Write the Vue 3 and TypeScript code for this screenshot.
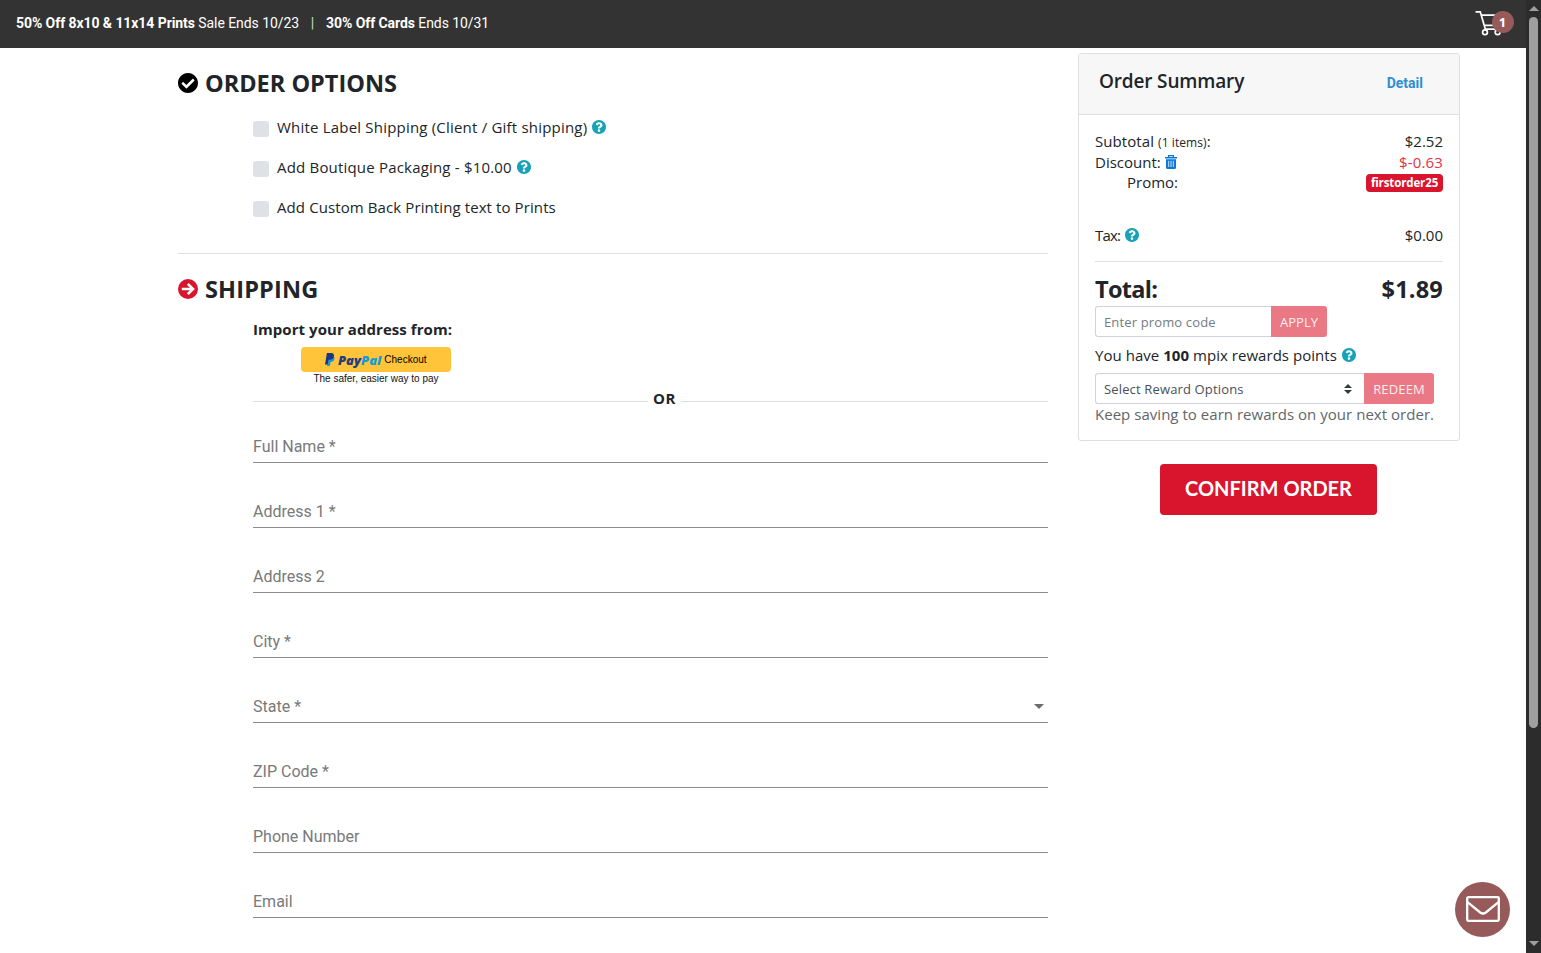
<script setup lang="ts">
import { ref } from 'vue'

interface ShippingField {
  label: string
  dropdown?: boolean
}

interface OrderOption {
  label: string
  help: boolean
  cls: string
}

const options: OrderOption[] = [
  { label: 'White Label Shipping (Client / Gift shipping)', help: true, cls: 'opt-a' },
  { label: 'Add Boutique Packaging - $10.00', help: true, cls: 'opt-b' },
  { label: 'Add Custom Back Printing text to Prints', help: false, cls: 'opt-c' },
]

const fields: ShippingField[] = [
  { label: 'Full Name *' },
  { label: 'Address 1 *' },
  { label: 'Address 2' },
  { label: 'City *' },
  { label: 'State *', dropdown: true },
  { label: 'ZIP Code *' },
  { label: 'Phone Number' },
  { label: 'Email' },
]

const promo = ref('')

const helpPath =
  'M504 256c0 136.997-111.043 248-248 248S8 392.997 8 256C8 119.083 119.043 8 256 8s248 111.083 248 248zM262.655 90c-54.497 0-89.255 22.957-116.549 63.758-3.536 5.286-2.353 12.415 2.715 16.258l34.699 26.31c5.205 3.947 12.621 3.008 16.665-2.122 17.864-22.658 30.113-35.797 57.303-35.797 20.429 0 45.698 13.148 45.698 32.958 0 14.976-12.363 22.667-32.534 33.976C247.128 238.528 216 254.941 216 296v4c0 6.627 5.373 12 12 12h56c6.627 0 12-5.373 12-12v-1.333c0-28.462 83.186-29.647 83.186-106.667 0-58.002-60.165-102-116.531-102zM256 338c-25.365 0-46 20.635-46 46 0 25.364 20.635 46 46 46s46-20.636 46-46c0-25.365-20.635-46-46-46z'
const checkPath =
  'M504 256c0 136.967-111.033 248-248 248S8 392.967 8 256 119.033 8 256 8s248 111.033 248 248zM227.314 387.314l184-184c6.248-6.248 6.248-16.379 0-22.627l-22.627-22.627c-6.248-6.249-16.379-6.249-22.628 0L216 308.118l-70.059-70.059c-6.248-6.248-16.379-6.248-22.628 0l-22.627 22.627c-6.248 6.248-6.248 16.379 0 22.627l104 104c6.249 6.249 16.379 6.249 22.628.001z'
</script>

<template>
  <div class="screen">
    <div class="page">
      <header class="topbar">
        <div class="deals">
          <span class="deal-one"><b>50% Off 8x10 &amp; 11x14 Prints</b> Sale Ends 10/23</span>
          <span class="bar">|</span>
          <span class="deal-two"><b>30% Off Cards</b> Ends 10/31</span>
        </div>
        <div class="cart">
          <svg width="30" height="28" viewBox="0 0 30 28" fill="none" stroke="#fff" stroke-width="1.7">
            <path d="M0.500 1.900h4.800l5 17.200M6.200 5.200h20l-3.400 10.200H9.300M10.300 19.100h14" />
            <circle cx="10" cy="22.300" r="2.400" />
            <circle cx="22.600" cy="22.300" r="2.400" />
          </svg>
          <span class="count">1</span>
        </div>
      </header>

      <div class="content">
        <main class="main">
          <h2 class="heading h-options">
            <svg width="20" height="20" viewBox="8 8 496 496"><path :d="checkPath" fill="#000" /></svg>
            <span>ORDER OPTIONS</span>
          </h2>
          <div class="options">
            <label v-for="o in options" :key="o.label" class="option">
              <span class="box"></span>
              <span class="option-label" :class="o.cls">{{ o.label }}</span>
              <svg v-if="o.help" class="help" width="14" height="14" viewBox="8 8 496 496"><path :d="helpPath" /></svg>
            </label>
          </div>
          <div class="rule"></div>
          <h2 class="heading h-shipping">
            <svg width="20" height="20" viewBox="0 0 20 20">
              <circle cx="10" cy="10" r="10" fill="#d9152d" />
              <path d="M3.800 10h11M9.800 4.800l5.200 5.200-5.200 5.200" fill="none" stroke="#fff" stroke-width="2.600" />
            </svg>
            <span>SHIPPING</span>
          </h2>
          <div class="shipping">
            <div class="import"><span>Import your address from:</span></div>
            <div class="paypal">
              <button class="pp-button">
                <svg width="10" height="13" viewBox="0 0 10 13">
                  <path d="M3.400 3h4.200c2 .5 2.300 2 1.600 3.700C8.600 8.300 7.300 8.900 5.600 8.900l-.7 4H2z" fill="#179bd7" />
                  <path d="M1.900 0h4.300c2.200 0 3.200 1.400 2.700 3.500C8.400 5.700 7 6.700 4.800 6.700H3.500l-.8 4.700H0z" fill="#1c3481" />
                </svg>
                <span class="pp-word"><i class="pay">Pay</i><i class="pal">Pal</i></span>
                <span class="pp-check">Checkout</span>
              </button>
              <div class="pp-tag"><span>The safer, easier way to pay</span></div>
            </div>
            <div class="or"><span>OR</span></div>
            <div class="fields">
              <div v-for="f in fields" :key="f.label" class="field">
                <span>{{ f.label }}</span>
                <i v-if="f.dropdown" class="caret"></i>
              </div>
            </div>
          </div>
        </main>

        <aside class="side">
          <section class="card">
            <div class="card-head">
              <span class="card-title">Order Summary</span>
              <a class="detail">Detail</a>
            </div>
            <div class="card-body">
              <div class="line l-sub">
                <span class="t-sub">Subtotal <small>(1 items)</small>:</span>
                <span class="amt">$2.52</span>
              </div>
              <div class="line l-disc">
                <span class="disc">
                  <span class="t-disc">Discount:</span>
                  <svg class="trash" width="12" height="14" viewBox="0 0 12 14">
                    <path d="M0 2h12v1.600H0zM1 4.200h10V12.500q0 1.500-1.500 1.500h-7Q1 14 1 12.500z" fill="#0d78dc" />
                    <path d="M3.600 2V.7h4.800V2" fill="none" stroke="#0d78dc" stroke-width="1.300" />
                    <path d="M3.700 5.800v6.200M6 5.800v6.200M8.300 5.800v6.200" stroke="#fff" stroke-width=".8" />
                  </svg>
                </span>
                <span class="amt neg">$-0.63</span>
              </div>
              <div class="line l-promo">
                <span class="t-promo">Promo:</span>
                <span class="badge"><span>firstorder25</span></span>
              </div>
              <div class="line l-tax">
                <span class="disc">
                  <span class="t-tax">Tax:</span>
                  <svg class="help" width="14" height="14" viewBox="8 8 496 496"><path :d="helpPath" /></svg>
                </span>
                <span class="amt">$0.00</span>
              </div>
              <div class="line l-total">
                <span class="t-total">Total:</span>
                <span class="t-sum">$1.89</span>
              </div>
              <div class="group">
                <input v-model="promo" class="promo" type="text" placeholder="Enter promo code" />
                <button class="pink apply">APPLY</button>
              </div>
              <div class="points">
                <span class="t-points">You have <b>100</b> mpix rewards points</span>
                <svg class="help" width="14" height="14" viewBox="8 8 496 496"><path :d="helpPath" /></svg>
              </div>
              <div class="group">
                <div class="select">
                  <span>Select Reward Options</span>
                  <svg width="8" height="10" viewBox="0 0 8 10"><path d="M4 0l4 4H0zM4 10L0 6h8z" fill="#343a40" /></svg>
                </div>
                <button class="pink redeem">REDEEM</button>
              </div>
              <div class="keep"><span>Keep saving to earn rewards on your next order.</span></div>
            </div>
          </section>
          <button class="confirm">CONFIRM ORDER</button>
        </aside>
      </div>

      <button class="mail" aria-label="Contact">
        <svg width="34" height="26" viewBox="0 0 34 26" fill="none" stroke="#fff" stroke-width="2.300">
          <rect x="1.200" y="1.200" width="31.600" height="23.600" rx="1" />
          <path d="M1.500 6.200l12.700 10.300q2.800 2.100 5.600 0L32.500 6.200" />
        </svg>
      </button>
    </div>
    <div class="scrollbar">
      <i class="up"></i>
      <i class="thumb"></i>
      <i class="down"></i>
    </div>
  </div>
</template>

<style>
body {
  margin: 0;
  overflow: hidden;
}
</style>

<style scoped>
* {
  box-sizing: border-box;
}
.screen {
  display: flex;
  width: 1541px;
  height: 953px;
  overflow: hidden;
  background: #fff;
  color: #212529;
  font-family: 'Open Sans', 'Noto Sans', sans-serif;
  font-size: 15px;
  white-space: nowrap;
}
button {
  border: 0;
  padding: 0;
  margin: 0;
  font-family: inherit;
}
svg {
  display: block;
  flex: none;
}
.page {
  position: relative;
  width: 1526px;
  height: 953px;
}
.topbar {
  display: flex;
  justify-content: space-between;
  height: 48px;
  padding: 0 12px 0 16px;
  background: #333;
  color: #fff;
}
.deals {
  display: flex;
  height: 46px;
  align-items: center;
  font-family: Roboto, sans-serif;
  font-size: 14px;
  letter-spacing: -0.07px;
}
.deals b {
  font-weight: 700;
}
.bar {
  width: 27px;
  text-align: center;
  color: #bfe3bf;
}
.cart {
  position: relative;
  width: 39px;
  padding-top: 10px;
}
.count {
  position: absolute;
  right: 0;
  top: 11px;
  width: 22px;
  height: 22px;
  padding-right: 1px;
  border-radius: 50%;
  background: #975a5b;
  font: 700 13px/22px 'Open Sans', sans-serif;
  text-align: center;
}
.content {
  display: flex;
  gap: 30px;
  padding-left: 178px;
}
.main {
  width: 870px;
}
.heading {
  display: flex;
  align-items: center;
  gap: 7px;
  height: 36px;
  margin: 0;
  font-size: 23.5px;
  font-weight: 700;
}
.h-options {
  margin-top: 17px;
}
.options {
  padding: 6px 0 0 75px;
}
.option {
  display: flex;
  align-items: center;
  height: 40px;
}
.box {
  width: 16px;
  height: 16px;
  margin: 4px 8px 0 0;
  border-radius: 3px;
  background: #dee2e6;
}
.opt-a {
  letter-spacing: 0.2px;
}
.opt-b {
  letter-spacing: 0.19px;
}
.opt-c {
  letter-spacing: 0.1px;
}
.help {
  margin-left: 5px;
  fill: #17a2b8;
}
.rule {
  height: 1px;
  margin-top: 26px;
  background: #dfdfdf;
}
.h-shipping {
  margin-top: 17px;
  letter-spacing: 0.15px;
}
.shipping {
  padding-left: 75px;
}
.import {
  height: 40px;
  padding-top: 11px;
  line-height: 22px;
  font-weight: 700;
  letter-spacing: 0.06px;
}
.paypal {
  width: 150px;
  margin-left: 48px;
  font-family: 'Liberation Sans', Arial, sans-serif;
  color: #111;
}
.pp-button {
  display: flex;
  align-items: center;
  width: 150px;
  height: 25px;
  padding-left: 24px;
  border-radius: 4px;
  background: #ffc439;
}
.pp-word {
  margin: 2px 0 0 3px;
  font: italic 800 13px/25px 'Open Sans', sans-serif;
}
.pay {
  color: #253b80;
}
.pal {
  color: #179bd7;
}
.pp-check {
  margin: -1px 0 0 3px;
  font-size: 10px;
}
.pp-tag {
  height: 14px;
  font-size: 10px;
  line-height: 14px;
  text-align: center;
}
.or {
  display: flex;
  align-items: center;
  gap: 5px;
  height: 22px;
  margin-top: 2px;
  font-weight: 700;
}
.or span {
  margin-top: -2px;
  letter-spacing: 0.6px;
}
.or::before,
.or::after {
  content: '';
  flex: 1;
  height: 1px;
  margin-top: 4px;
  background: #dfdfdf;
}
.or::before {
  flex: 0 0 395px;
}
.fields {
  padding-top: 22px;
}
.field {
  display: flex;
  align-items: center;
  justify-content: space-between;
  height: 31px;
  margin-bottom: 34px;
  padding-bottom: 2px;
  border-bottom: 1px solid #8c8c8c;
  font-family: Roboto, sans-serif;
  font-size: 16px;
  color: #797979;
}
.caret {
  margin-right: 4px;
  border: 5px solid transparent;
  border-top-color: #6c6c6c;
  border-bottom: 0;
}
.side {
  width: 382px;
  padding-top: 5px;
}
.card {
  height: 388px;
  border: 1px solid #dfdfdf;
  border-radius: 3px;
}
.card-head {
  display: flex;
  justify-content: space-between;
  height: 61px;
  padding: 0 36px 0 20px;
  border-bottom: 1px solid #dfdfdf;
  background: #f7f7f7;
  line-height: 55px;
}
.card-title {
  font-size: 19px;
  font-weight: 600;
  letter-spacing: -0.16px;
}
.detail {
  padding-top: 2px;
  font-family: Roboto, sans-serif;
  font-size: 14px;
  font-weight: 700;
  color: #2e8fd4;
}
.card-body {
  padding: 15px 16px 0;
}
.line {
  display: flex;
  align-items: center;
  justify-content: space-between;
  height: 21px;
}
.line small {
  font-size: 12px;
}
.t-sub {
  letter-spacing: 0.08px;
}
.disc {
  display: flex;
  align-items: center;
}
.trash {
  margin-left: 4px;
}
.neg {
  color: #dc3545;
  letter-spacing: 0.15px;
}
.l-promo {
  height: 20px;
  padding-left: 32px;
}
.badge {
  width: 77px;
  height: 18px;
  margin-top: 2px;
  border-radius: 4px;
  background: #d9152d;
  color: #fff;
  font-size: 11.5px;
  font-weight: 700;
  line-height: 18px;
  letter-spacing: -0.12px;
  text-align: center;
}
.l-tax {
  height: 70px;
  padding-top: 17px;
  border-bottom: 1px solid #dfdfdf;
}
.t-tax {
  letter-spacing: -0.8px;
}
.l-total {
  height: 44px;
  padding-top: 10px;
  font-size: 23.5px;
  font-weight: 700;
}
.t-total {
  letter-spacing: -0.7px;
}
.t-sum {
  letter-spacing: 0.2px;
}
.group {
  display: flex;
  height: 31px;
}
.promo {
  width: 176px;
  padding: 0 8px;
  border: 1px solid #ced4da;
  border-right: 0;
  border-radius: 3px 0 0 3px;
  outline: 0;
  font-family: inherit;
  font-size: 13px;
  letter-spacing: 0.14px;
}
.promo::placeholder {
  color: #757c82;
}
.pink {
  border-radius: 0 3px 3px 0;
  background: #ea7885;
  color: #fdeef0;
  font-size: 13px;
}
.apply {
  width: 56px;
}
.redeem {
  width: 70px;
  letter-spacing: 0.15px;
}
.points {
  display: flex;
  align-items: center;
  height: 36px;
  letter-spacing: 0.04px;
}
.select {
  display: flex;
  align-items: center;
  justify-content: space-between;
  width: 269px;
  padding: 0 12px 0 8px;
  border: 1px solid #ced4da;
  border-right: 0;
  border-radius: 3px 0 0 3px;
  color: #495057;
  font-size: 13px;
  letter-spacing: 0.15px;
}
.keep {
  margin-top: -1px;
  line-height: 22px;
  letter-spacing: 0.03px;
  color: #5f666c;
}
.confirm {
  display: block;
  width: 217px;
  height: 51px;
  margin: 23px 0 0 82px;
  padding-bottom: 2px;
  border-radius: 4px;
  background: #d9152d;
  color: #fff;
  font: 700 20px/49px Lato, sans-serif;
}
.mail {
  position: absolute;
  right: 16px;
  bottom: 16px;
  display: flex;
  align-items: center;
  justify-content: center;
  width: 55px;
  height: 55px;
  padding-bottom: 1px;
  border-radius: 50%;
  background: #975a5b;
}
.scrollbar {
  display: flex;
  flex-direction: column;
  align-items: center;
  width: 15px;
  height: 953px;
  background: #2c2c2c;
}
.up {
  margin-top: 6px;
  border: 5px solid transparent;
  border-top: 0;
  border-bottom: 5px solid #9f9f9f;
}
.thumb {
  width: 9px;
  height: 711px;
  margin-top: 6px;
  border-radius: 5px;
  background: #9f9f9f;
}
.down {
  margin: auto 0 7px;
  border: 5px solid transparent;
  border-top-color: #9f9f9f;
  border-bottom: 0;
}
</style>
